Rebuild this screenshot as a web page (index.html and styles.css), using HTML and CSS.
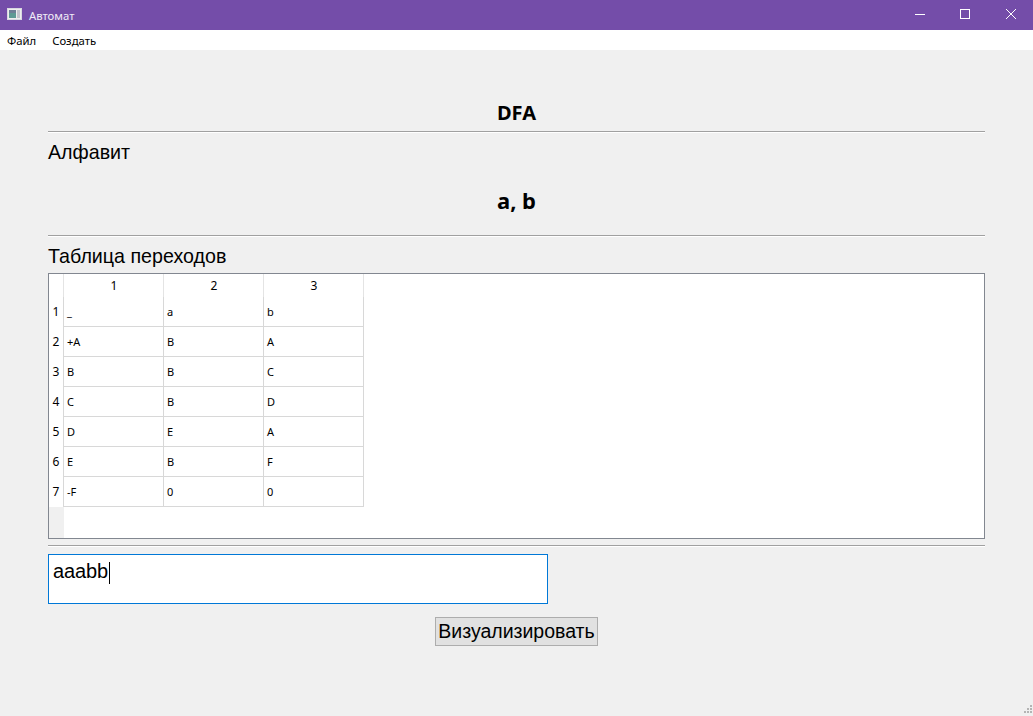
FILE: index.html
```html
<!DOCTYPE html>
<html lang="ru">
<head>
<meta charset="utf-8">
<title>Автомат</title>
<link rel="stylesheet" href="styles.css">
</head>
<body>
<div class="window">
  <header class="titlebar">
    <svg class="appicon" width="15" height="12" viewBox="0 0 15 12"><rect x="0" y="0" width="15" height="12" fill="#d8d8e0"/><rect x="1" y="1" width="13" height="10" fill="#eeeeee"/><rect x="2" y="2" width="7" height="8" fill="#5f9a94"/><rect x="2" y="2" width="7" height="3" fill="#6f7f96"/><rect x="10" y="2" width="3" height="8" fill="#c4c4cc"/></svg>
    <span class="title">Автомат</span>
    <div class="winbtns">
      <div class="winbtn"><svg width="10" height="10" viewBox="0 0 10 10"><rect x="0" y="5" width="10" height="1" fill="#fff"/></svg></div>
      <div class="winbtn"><svg width="10" height="10" viewBox="0 0 10 10"><rect x="0.5" y="0.5" width="9" height="9" fill="none" stroke="#fff"/></svg></div>
      <div class="winbtn winbtn-close"><svg width="10" height="10" viewBox="0 0 10 10"><path d="M0 0L10 10M10 0L0 10" stroke="#fff" stroke-width="1" fill="none"/></svg></div>
    </div>
  </header>
  <nav class="menubar"><span class="menuitem">Файл</span><span class="menuitem">Создать</span></nav>
  <main class="content">
    <h1 class="heading h-dfa">DFA</h1>
    <hr class="sep">
    <div class="label l-alpha">Алфавит</div>
    <div class="heading h-alpha">a, b</div>
    <hr class="sep">
    <div class="label l-table">Таблица переходов</div>
    <div class="tableframe">
      <div class="grid">
        <div class="corner"></div><div class="colhead">1</div><div class="colhead">2</div><div class="colhead">3</div>
        <div class="rowhead first">1</div><div class="cell first">_</div><div class="cell first">a</div><div class="cell first">b</div>
        <div class="rowhead">2</div><div class="cell">+A</div><div class="cell">B</div><div class="cell">A</div>
        <div class="rowhead">3</div><div class="cell">B</div><div class="cell">B</div><div class="cell">C</div>
        <div class="rowhead">4</div><div class="cell">C</div><div class="cell">B</div><div class="cell">D</div>
        <div class="rowhead">5</div><div class="cell">D</div><div class="cell">E</div><div class="cell">A</div>
        <div class="rowhead">6</div><div class="cell">E</div><div class="cell">B</div><div class="cell">F</div>
        <div class="rowhead">7</div><div class="cell">-F</div><div class="cell">0</div><div class="cell">0</div>
      </div>
      <div class="rest"><div class="restgutter"></div></div>
    </div>
    <hr class="sep s-input">
    <div class="input"><span class="inputtext">aaabb</span><span class="caret"></span></div>
    <div class="actions"><button class="btn" type="button">Визуализировать</button></div>
  </main>
  <svg class="grip" width="10" height="10" viewBox="0 0 10 10"><g fill="#b4b4b4"><rect x="8" y="0" width="2" height="2"/><rect x="5" y="3" width="2" height="2"/><rect x="8" y="3" width="2" height="2"/><rect x="2" y="6" width="2" height="2"/><rect x="5" y="6" width="2" height="2"/><rect x="8" y="6" width="2" height="2"/></g></svg>
</div>
</body>
</html>
```
FILE: styles.css
```css
* { box-sizing: border-box; }
html, body { margin: 0; padding: 0; }
body { width: 1033px; height: 716px; overflow: hidden; background: #f0f0f0; font-family: "Liberation Sans", Arial, sans-serif; color: #000; }
.window { position: relative; width: 1033px; height: 716px; display: flex; flex-direction: column; }
.titlebar { height: 30px; background: #744da9; display: flex; align-items: center; padding-left: 7px; flex: none; }
.appicon { flex: none; margin-top: -2px; }
.title { margin-left: 7px; font: 11.3px "Noto Sans", sans-serif; color: #f0ebf6; }
.winbtns { margin-left: auto; display: flex; height: 30px; }
.winbtn { width: 45px; height: 30px; padding: 9px 0 0 17px; }
.winbtn-close { padding-left: 18px; }
.winbtn svg { display: block; }
.menubar { height: 20px; background: #fff; display: flex; align-items: center; padding-left: 7px; gap: 16px; flex: none; font: 11.3px "Noto Sans", sans-serif; }
.content { flex: 1; padding: 50px 48px 0; display: flex; flex-direction: column; }
.heading { margin: 0; text-align: center; font-family: "Noto Sans", sans-serif; font-weight: bold; font-size: 20px; }
.h-dfa { height: 31px; line-height: 26px; }
.sep { margin: 0; width: 100%; height: 2px; border: 0; border-top: 1px solid #a0a0a0; border-bottom: 1px solid #fff; flex: none; }
.label { font-size: 19.65px; line-height: 24px; }
.l-alpha { height: 24px; margin-top: 7px; }
.h-alpha { height: 71px; font-size: 22px; line-height: 24px; padding-top: 24px; }
.l-table { margin-top: 7px; height: 29px; }
.tableframe { height: 266px; border: 1px solid #828790; background: #fff; display: flex; flex-direction: column; flex: none; }
.grid { display: grid; grid-template-columns: 15px 100px 100px 100px; grid-template-rows: 23px 30px repeat(6, 30px); font: 11px "Noto Sans", sans-serif; }
.corner, .colhead { background: #fff; }
.corner { border-right: 1px solid #e4e4e4; }
.colhead { text-align: center; line-height: 23px; font-size: 12px; border-right: 1px solid #e4e4e4; padding-left: 1px; }
.rowhead { line-height: 30px; text-align: center; font-size: 12px; background: #fff; border-right: 1px solid #d8d8d8; }
.cell { border-right: 1px solid #d8d8d8; border-bottom: 1px solid #d8d8d8; padding-left: 3px; line-height: 29px; }
.rest { flex: 1; display: flex; }
.restgutter { width: 15px; background: #f0f0f0; }
.s-input { margin-top: 6px; }
.input { margin-top: 7px; width: 500px; height: 50px; flex: none; background: #fff; border: 1px solid #0078d7; padding: 3px 4px; display: flex; align-items: flex-start; font-size: 20px; line-height: 26px; letter-spacing: -0.1px; }
.caret { width: 1px; height: 22px; background: #000; margin-top: 4px; margin-left: 1px; }
.actions { display: flex; justify-content: center; margin-top: 13px; }
.btn { width: 163px; height: 29px; padding: 0; background: #e1e1e1; border: 1px solid #adadad; font: 19.5px "Liberation Sans", sans-serif; color: #000; line-height: 27px; border-radius: 0; }
.grip { position: absolute; right: 1px; bottom: 1px; }
```
